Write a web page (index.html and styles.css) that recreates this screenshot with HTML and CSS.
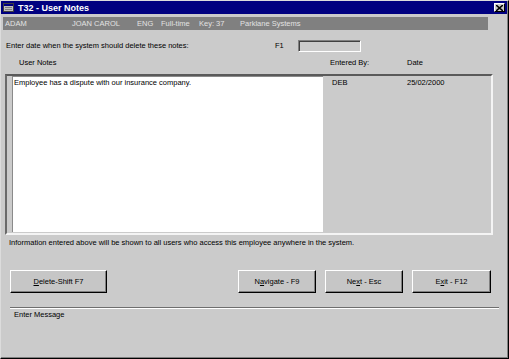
FILE: index.html
```html
<!DOCTYPE html>
<html lang="en">
<head>
    <meta charset="UTF-8">
    <title>T32 - User Notes</title>
    <link rel="stylesheet" href="styles.css">
</head>
<body>
    <div class="window">
        <div class="titlebar">
            <svg class="app-icon" width="11" height="9" viewBox="0 0 11 9">
                <rect x="0.5" y="0.5" width="10" height="8" fill="#c0c0c0" stroke="#404040"/>
                <rect x="1" y="1" width="9" height="2" fill="#000080"/>
                <line x1="2" y1="4.5" x2="9" y2="4.5" stroke="#808080"/>
                <line x1="2" y1="6.5" x2="9" y2="6.5" stroke="#808080"/>
            </svg>
            <span class="title">T32 - User Notes</span>
            <div class="close-btn">
                <svg width="7" height="6" viewBox="0 0 7 6">
                    <path d="M0 0 L7 6 M7 0 L0 6" stroke="#000" stroke-width="1.6"/>
                </svg>
            </div>
        </div>

        <div class="infobar">
            <span class="f-surname">ADAM</span>
            <span class="f-first">JOAN CAROL</span>
            <span class="f-dept">ENG</span>
            <span class="f-type">Full-time</span>
            <span class="f-key">Key:</span>
            <span class="f-keyval">37</span>
            <span>Parklane Systems</span>
        </div>

        <div class="date-row">
            <span class="date-label">Enter date when the system should delete these notes:</span>
            <span class="f1">F1</span>
            <div class="date-field"></div>
        </div>

        <div class="heads">
            <span class="h-notes">User Notes</span>
            <span class="h-by">Entered By:</span>
            <span>Date</span>
        </div>

        <div class="frame">
            <div class="notes">Employee has a dispute with our insurance company.</div>
            <div class="side">
                <span class="s-by">DEB</span>
                <span>25/02/2000</span>
            </div>
        </div>

        <p class="info">Information entered above will be shown to all users who access this employee anywhere in the system.</p>

        <div class="buttons">
            <button class="btn btn-delete"><u>D</u>elete-Shift F7</button>
            <div class="spacer"></div>
            <button class="btn btn-nav">N<u>a</u>vigate - F9</button>
            <button class="btn btn-next">Ne<u>x</u>t - Esc</button>
            <button class="btn btn-exit">E<u>x</u>it - F12</button>
        </div>

        <div class="separator"></div>
        <p class="message">Enter Message</p>
    </div>
</body>
</html>
```

FILE: styles.css
```css
body {
    margin: 0;
    background-color: #cbcbcb;
    font-family: "Liberation Sans", Arial, sans-serif;
    font-size: 7.5px;
    line-height: 10px;
    color: #000;
}
p {
    margin: 0;
}
.window {
    width: 509px;
    height: 359px;
    box-sizing: border-box;
    background-color: #cbcbcb;
    border-top: 1px solid #dcdcdc;
    border-left: 1px solid #dcdcdc;
    border-right: 1px solid #000;
    border-bottom: 1px solid #000;
    box-shadow: inset -1px -1px #808080;
}
.titlebar {
    height: 13px;
    background-color: #000080;
    display: flex;
    align-items: center;
    margin-right: 1px;
}
.app-icon {
    margin-left: 2px;
    margin-right: 4px;
}
.title {
    color: #fff;
    font-weight: bold;
    font-size: 9px;
    flex: 1;
}
.close-btn {
    width: 11px;
    height: 9px;
    box-sizing: border-box;
    margin-right: 2px;
    background-color: #cbcbcb;
    border-top: 1px solid #fff;
    border-left: 1px solid #fff;
    border-right: 1px solid #000;
    border-bottom: 1px solid #000;
    display: flex;
    align-items: center;
    justify-content: center;
}
.infobar {
    margin: 3px 0 0 2px;
    width: 485px;
    height: 13px;
    background-color: #808080;
    color: #e2e2e2;
    display: flex;
    align-items: center;
    padding-left: 2px;
    box-sizing: border-box;
    white-space: nowrap;
}
.infobar span {
    flex-shrink: 0;
}
.f-surname { width: 67px; }
.f-first { width: 65px; }
.f-dept { width: 24px; }
.f-type { width: 38px; }
.f-key { width: 17px; }
.f-keyval { width: 24px; }

.date-row {
    margin: 10px 0 0 5px;
    height: 12px;
    display: flex;
    align-items: center;
}
.date-label {
    width: 269px;
}
.f1 {
    width: 23px;
}
.date-field {
    width: 63px;
    height: 12px;
    box-sizing: border-box;
    border-top: 1px solid #808080;
    border-left: 1px solid #808080;
    border-right: 1px solid #fff;
    border-bottom: 1px solid #fff;
    box-shadow: inset 1px 1px #404040;
}
.heads {
    margin: 6px 0 0 18px;
    display: flex;
}
.h-notes { width: 311px; }
.h-by { width: 77px; }

.frame {
    margin: 6px 0 0 4px;
    width: 488px;
    height: 161px;
    box-sizing: border-box;
    border-top: 2px solid #5a5a5a;
    border-left: 2px solid #6a6a6a;
    border-right: 2px solid #f4f4f4;
    border-bottom: 2px solid #f4f4f4;
    padding-left: 5px;
    display: flex;
    align-items: flex-start;
}
.notes {
    width: 311px;
    height: 156px;
    box-sizing: border-box;
    background-color: #fff;
    border-left: 1px solid #8a8a8a;
    border-top: 1px solid #8a8a8a;
    padding: 1px 0 0 1px;
}
.side {
    display: flex;
    padding: 2px 0 0 9px;
}
.s-by { width: 75px; }

.info {
    margin: 3px 0 0 8px;
}
.buttons {
    margin: 22px 0 0 9px;
    width: 481px;
    display: flex;
    gap: 9px;
}
.spacer {
    flex: 1;
}
.btn {
    height: 23px;
    padding: 0;
    font-family: "Liberation Sans", Arial, sans-serif;
    font-size: 7.5px;
    color: #000;
    background-color: #c6c6c6;
    border-top: 1px solid #fff;
    border-left: 1px solid #fff;
    border-right: 1px solid #000;
    border-bottom: 1px solid #000;
    box-shadow: inset -1px -1px #808080;
}
.btn-delete { width: 97px; }
.btn-nav { width: 78px; }
.btn-next { width: 78px; }
.btn-exit { width: 79px; }

.separator {
    margin: 14px 0 0 9px;
    width: 489px;
    border-top: 1px solid #6e6e6e;
    border-bottom: 1px solid #fff;
}
.message {
    margin: 1px 0 0 13px;
}
```
